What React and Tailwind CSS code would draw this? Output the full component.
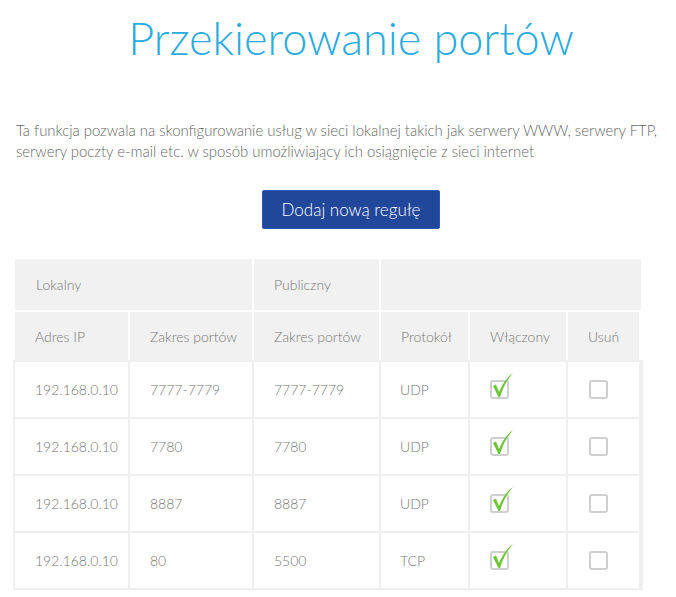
import React from 'react';

const rows = [
  { ip: '192.168.0.10', local: '7777-7779', pub: '7777-7779', proto: 'UDP' },
  { ip: '192.168.0.10', local: '7780', pub: '7780', proto: 'UDP' },
  { ip: '192.168.0.10', local: '8887', pub: '8887', proto: 'UDP' },
  { ip: '192.168.0.10', local: '80', pub: '5500', proto: 'TCP' },
];

const cols = 'grid grid-cols-[113px_122px_125px_87px_96px_71px] gap-[2px]';

const Checked = () => (
  <div className="relative w-[19px] h-[19px] border-2 border-[#cfcfcf] rounded-[3px] bg-white">
    <svg className="absolute -top-[9px] -left-[1px]" width="24" height="26" viewBox="0 0 24 26">
      <path d="M2 13 L5 11.5 L8 19 C11 12 15 5 22 0 C16 7 12 14 9 24 L7.5 24 Z" fill="#6cc534" />
    </svg>
  </div>
);

const Unchecked = () => (
  <div className="w-[19px] h-[19px] border-2 border-[#cfcfcf] rounded-[3px] bg-white" />
);

export default function App() {
  return (
    <div className="min-h-screen bg-white text-[#777] font-['Lato','Open_Sans',sans-serif]">
      <div className="w-[670px] ml-[16px]">
        <h1 className="pt-[8px] text-center text-[45px] font-light leading-[60px] text-[#29abe0]">
          Przekierowanie portów
        </h1>
        <p className="mt-[52px] text-[14.9px] leading-[21px] font-light text-[#666]">
          Ta funkcja pozwala na skonfigurowanie usług w sieci lokalnej takich jak serwery WWW, serwery FTP, serwery poczty e-mail etc. w sposób umożliwiający ich osiągnięcie z sieci internet
        </p>
        <div className="flex justify-center mt-[28px]">
          <button className="w-[178px] h-[39px] bg-[#21479b] text-white text-[17px] font-light rounded-[2px] border border-[#2a58b8]">
            Dodaj nową regułę
          </button>
        </div>
      </div>

      <div className="mt-[30px] ml-[15px] w-[626px] text-[14px] font-light">
        <div className="grid grid-cols-[237px_125px_1fr] gap-[2px]">
          <div className="h-[51px] bg-[#f1f1f1] flex items-center pl-[21px]">Lokalny</div>
          <div className="h-[51px] bg-[#f1f1f1] flex items-center pl-[20px]">Publiczny</div>
          <div className="h-[51px] bg-[#f1f1f1]" />
        </div>
        <div className={`${cols} mt-[2px]`}>
          {['Adres IP', 'Zakres portów', 'Zakres portów', 'Protokół', 'Włączony', 'Usuń'].map((h, i) => (
            <div key={i} className="h-[48px] bg-[#f1f1f1] flex items-center pl-[20px]">
              {h}
            </div>
          ))}
        </div>
        <div className="bg-[#efefef] p-[2px] w-[630px] -ml-[2px]">
          <div className="flex flex-col gap-[2px]">
            {rows.map((r, i) => (
              <div key={i} className={cols}>
                <div className="h-[55px] bg-white flex items-center pl-[20px]">{r.ip}</div>
                <div className="h-[55px] bg-white flex items-center pl-[20px]">{r.local}</div>
                <div className="h-[55px] bg-white flex items-center pl-[20px]">{r.pub}</div>
                <div className="h-[55px] bg-white flex items-center pl-[19px]">{r.proto}</div>
                <div className="h-[55px] bg-white flex items-center pl-[20px]">
                  <Checked />
                </div>
                <div className="h-[55px] bg-white flex items-center pl-[21px]">
                  <Unchecked />
                </div>
              </div>
            ))}
          </div>
        </div>
      </div>
    </div>
  );
}
